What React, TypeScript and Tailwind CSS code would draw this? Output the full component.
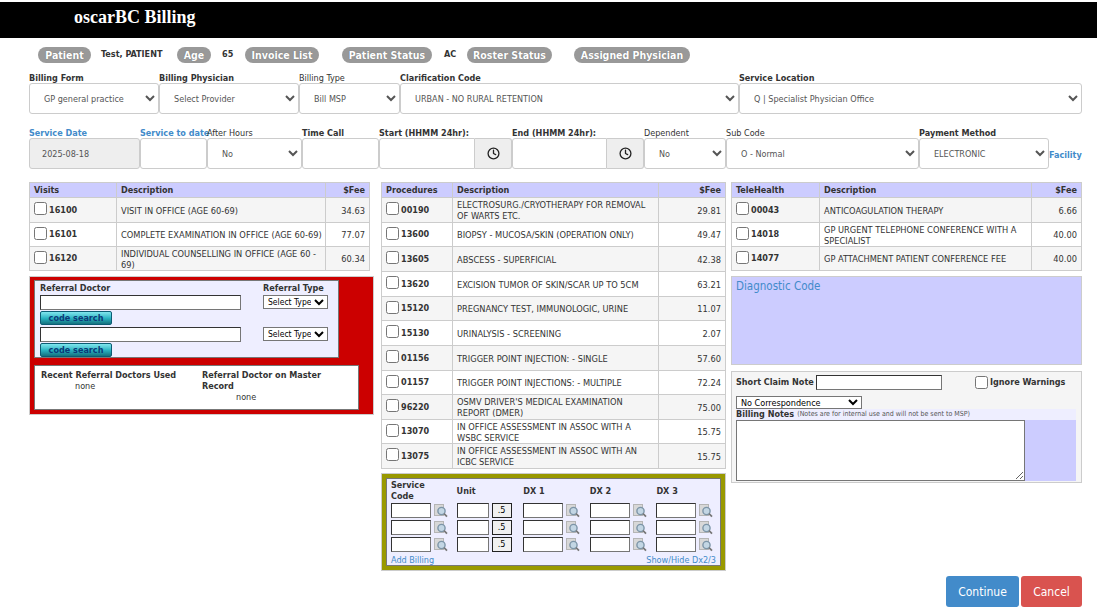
import React from 'react';
import { Clock } from 'lucide-react';

const pill = "inline-block h-[16px] whitespace-nowrap leading-[16px] rounded-full bg-[#999999] text-center text-white font-bold text-[10.5px] [text-shadow:0_0_1px_#666]";
const label = "block h-[11px] whitespace-nowrap leading-[13px] text-[9px] font-bold text-[#333]";
const labelThin = "block h-[11px] whitespace-nowrap leading-[13px] text-[9px] text-[#333]";
const labelBlue = "block h-[11px] whitespace-nowrap leading-[13px] text-[9px] font-bold text-[#428bca]";
const inputField = "block w-full h-[31px] rounded-[3px] border border-[#ccc] px-[12px] text-[9px] text-[#555]";
const selectField = "block w-full h-[31px] rounded-[3px] border border-[#ccc] bg-white px-[10px] text-[9px] text-[#555]";
const rawInput = "block bg-white border border-[#767676] border-t-[#333] border-l-[#333] h-[15px]";

type Row = { code: string; desc: string; fee: string; h: number };

const visits: Row[] = [
  { code: '16100', desc: 'VISIT IN OFFICE (AGE 60-69)', fee: '34.63', h: 25 },
  { code: '16101', desc: 'COMPLETE EXAMINATION IN OFFICE (AGE 60-69)', fee: '77.07', h: 24 },
  { code: '16120', desc: 'INDIVIDUAL COUNSELLING IN OFFICE (AGE 60 - 69)', fee: '60.34', h: 24 },
];

const procedures: Row[] = [
  { code: '00190', desc: 'ELECTROSURG./CRYOTHERAPY FOR REMOVAL OF WARTS ETC.', fee: '29.81', h: 25 },
  { code: '13600', desc: 'BIOPSY - MUCOSA/SKIN (OPERATION ONLY)', fee: '49.47', h: 24 },
  { code: '13605', desc: 'ABSCESS - SUPERFICIAL', fee: '42.38', h: 25 },
  { code: '13620', desc: 'EXCISION TUMOR OF SKIN/SCAR UP TO 5CM', fee: '63.21', h: 25 },
  { code: '15120', desc: 'PREGNANCY TEST, IMMUNOLOGIC, URINE', fee: '11.07', h: 24 },
  { code: '15130', desc: 'URINALYSIS - SCREENING', fee: '2.07', h: 25 },
  { code: '01156', desc: 'TRIGGER POINT INJECTION: - SINGLE', fee: '57.60', h: 25 },
  { code: '01157', desc: 'TRIGGER POINT INJECTIONS: - MULTIPLE', fee: '72.24', h: 24 },
  { code: '96220', desc: "OSMV DRIVER'S MEDICAL EXAMINATION REPORT (DMER)", fee: '75.00', h: 25 },
  { code: '13070', desc: 'IN OFFICE ASSESSMENT IN ASSOC WITH A WSBC SERVICE', fee: '15.75', h: 24 },
  { code: '13075', desc: 'IN OFFICE ASSESSMENT IN ASSOC WITH AN ICBC SERVICE', fee: '15.75', h: 25 },
];

const telehealth: Row[] = [
  { code: '00043', desc: 'ANTICOAGULATION THERAPY', fee: '6.66', h: 25 },
  { code: '14018', desc: 'GP URGENT TELEPHONE CONFERENCE WITH A SPECIALIST', fee: '40.00', h: 24 },
  { code: '14077', desc: 'GP ATTACHMENT PATIENT CONFERENCE FEE', fee: '40.00', h: 24 },
];

function CodeTable({ title, rows, col1, col3 }: { title: string; rows: Row[]; col1: number; col3: number }) {
  return (
    <table className="w-full table-fixed border-collapse text-[9.2px] text-[#333]">
      <colgroup>
        <col style={{ width: col1 }} />
        <col />
        <col style={{ width: col3 }} />
      </colgroup>
      <thead>
        <tr className="h-[15px] bg-[#ccccff] text-[9px] font-bold leading-[11px]">
          <th className="border border-[#ccc] px-[4px] py-0 text-left font-bold">{title}</th>
          <th className="border border-[#ccc] px-[4px] py-0 text-left font-bold">Description</th>
          <th className="border border-[#ccc] px-[4px] py-0 text-right font-bold">$Fee</th>
        </tr>
      </thead>
      <tbody>
        {rows.map((r, i) => (
          <tr key={r.code} style={{ height: r.h }} className={i % 2 === 0 ? 'bg-[#f5f5f5]' : 'bg-white'}>
            <td className="border border-[#ccc] px-[4px] py-0">
              <span className="flex items-center font-bold text-[9px] leading-[11px]">
                <input type="checkbox" className="m-0 mr-[2px] -mt-[3px] h-[13px] w-[13px]" />
                {r.code}
              </span>
            </td>
            <td className="border border-[#ccc] py-0 pl-[4px] pr-[1px] leading-[11px]">{r.desc}</td>
            <td className="border border-[#ccc] px-[4px] py-0 text-right leading-[11px]">{r.fee}</td>
          </tr>
        ))}
      </tbody>
    </table>
  );
}

function Magnifier() {
  return (
    <svg width="14" height="14" viewBox="0 0 14 14" className="ml-[3px] shrink-0">
      <rect x="0.5" y="0.5" width="9" height="11" fill="#d8d8d8" stroke="#b5b5b5" />
      <circle cx="7.5" cy="7" r="3.6" fill="#c3d6e4" stroke="#7d95a8" strokeWidth="1.4" />
      <path d="M10 9.6 L13 12.6" stroke="#777" strokeWidth="1.8" />
    </svg>
  );
}

function SearchButton() {
  return (
    <button className="block h-[14px] w-[72px] rounded-[2px] border border-[#0b5c74] bg-gradient-to-b from-[#7fe6ee] via-[#2bb6c4] to-[#15727f] text-center text-[9px] font-bold leading-[11px] text-[#0b3a78]">
      code search
    </button>
  );
}

function ClockAddon() {
  return (
    <span className="flex h-[31px] w-[37px] shrink-0 items-center justify-center rounded-r-[3px] border border-l-0 border-[#ccc] bg-[#eeeeee]">
      <Clock size={13} strokeWidth={2.4} className="text-[#222]" />
    </span>
  );
}

function DxCell() {
  return (
    <div className="flex items-center">
      <input className={`${rawInput} w-[40px]`} />
      <Magnifier />
    </div>
  );
}

function DxRow() {
  return (
    <div className="mb-[2px] flex h-[15px]">
      <div className="w-[66px]"><DxCell /></div>
      <div className="flex w-[67px] items-center">
        <input className={`${rawInput} w-[32px]`} />
        <span className="ml-[3px] flex h-[15px] w-[20px] items-center justify-center border border-[#222] bg-[#f0f0f0] text-[9px] text-black">.5</span>
      </div>
      <div className="w-[67px]"><DxCell /></div>
      <div className="w-[67px]"><DxCell /></div>
      <div className="w-[60px]"><DxCell /></div>
    </div>
  );
}

export default function App() {
  return (
    <div className="h-[611px] w-[1097px] overflow-hidden bg-white pt-[2px] font-['DejaVu_Sans_Condensed','Noto_Sans',sans-serif]">
      <div className="h-[36px] bg-black pl-[74px] pt-[5px] font-['Liberation_Serif',serif] text-[18px] font-bold leading-[20px] text-white">
        oscarBC Billing
      </div>

      <div className="pl-[29px] pr-[15px]">
        <div className="ml-[9px] mt-[9px] flex h-[16px] items-center text-[9px] font-bold text-[#333]">
          <span className={`${pill} w-[53px]`}>Patient</span>
          <span className="ml-[10px] w-[76px] whitespace-nowrap">Test, PATIENT</span>
          <span className={`${pill} w-[34px]`}>Age</span>
          <span className="ml-[11px] w-[23px]">65</span>
          <span className={`${pill} w-[74px]`}>Invoice List</span>
          <span className={`${pill} ml-[23px] w-[90px]`}>Patient Status</span>
          <span className="ml-[12px] w-[23px]">AC</span>
          <span className={`${pill} w-[85px]`}>Roster Status</span>
          <span className={`${pill} ml-[22px] w-[116px]`}>Assigned Physician</span>
        </div>

        <div className="mt-[9px] flex">
          <div className="w-[130px] shrink-0">
            <span className={label}>Billing Form</span>
            <select className={selectField}><option>GP general practice</option></select>
          </div>
          <div className="w-[140px] shrink-0">
            <span className={label}>Billing Physician</span>
            <select className={selectField}><option>Select Provider</option></select>
          </div>
          <div className="w-[101px] shrink-0">
            <span className={labelThin}>Billing Type</span>
            <select className={selectField}><option>Bill MSP</option></select>
          </div>
          <div className="w-[339px] shrink-0">
            <span className={label}>Clarification Code</span>
            <select className={selectField}><option>URBAN - NO RURAL RETENTION</option></select>
          </div>
          <div className="w-[343px] shrink-0">
            <span className={label}>Service Location</span>
            <select className={selectField}><option>Q | Specialist Physician Office</option></select>
          </div>
        </div>

        <div className="mt-[13px] flex">
          <div className="w-[111px] shrink-0">
            <span className={labelBlue}>Service Date</span>
            <input readOnly value="2025-08-18" className={`${inputField} bg-[#eeeeee]`} />
          </div>
          <div className="w-[67px] shrink-0">
            <span className={labelBlue}>Service to date</span>
            <input className={`${inputField} bg-white`} />
          </div>
          <div className="w-[95px] shrink-0">
            <span className={labelThin}>After Hours</span>
            <select className={selectField}><option>No</option></select>
          </div>
          <div className="w-[77px] shrink-0">
            <span className={label}>Time Call</span>
            <input className={`${inputField} bg-white`} />
          </div>
          <div className="w-[133px] shrink-0">
            <span className={label}>Start (HHMM 24hr):</span>
            <div className="flex">
              <input className={`${inputField} bg-white rounded-r-none`} />
              <ClockAddon />
            </div>
          </div>
          <div className="w-[132px] shrink-0">
            <span className={label}>End (HHMM 24hr):</span>
            <div className="flex">
              <input className={`${inputField} bg-white rounded-r-none`} />
              <ClockAddon />
            </div>
          </div>
          <div className="w-[82px] shrink-0">
            <span className={labelThin}>Dependent</span>
            <select className={selectField}><option>No</option></select>
          </div>
          <div className="w-[193px] shrink-0">
            <span className={labelThin}>Sub Code</span>
            <select className={selectField}><option>O - Normal</option></select>
          </div>
          <div className="w-[130px] shrink-0">
            <span className={label}>Payment Method</span>
            <select className={selectField}><option>ELECTRONIC</option></select>
          </div>
          <a className="mt-[22px] whitespace-nowrap text-[9px] font-bold text-[#428bca]">Facility</a>
        </div>

        <div className="mt-[13px] flex items-start">
          <div className="w-[341px] shrink-0">
            <CodeTable title="Visits" rows={visits} col1={87} col3={44} />

            <div className="mt-[5px] h-[139px] w-[345px] border border-[#ccc] bg-[#cc0000] px-[4px] pt-[3px]">
              <div className="flex h-[78px] w-[305px] border border-[#777] bg-[#eeeeff] pl-[5px] pt-[1px]">
                <div className="w-[223px]">
                  <b className="block h-[13px] text-[9px] leading-[13px] text-[#333]">Referral Doctor</b>
                  <input className={`${rawInput} w-[201px]`} />
                  <div className="mt-[1px]"><SearchButton /></div>
                  <input className={`${rawInput} mt-[2px] w-[201px]`} />
                  <div className="mt-[1px]"><SearchButton /></div>
                </div>
                <div>
                  <b className="block h-[13px] text-[9px] leading-[13px] text-[#333]">Referral Type</b>
                  <select className="block h-[14px] w-[65px] border border-[#767676] bg-white text-[8.5px] text-black"><option>Select Type</option></select>
                  <select className="mt-[18px] block h-[14px] w-[65px] border border-[#767676] bg-white text-[8.5px] text-black"><option>Select Type</option></select>
                </div>
              </div>
              <div className="mt-[7px] flex h-[45px] w-[325px] border border-[#777] bg-white pl-[6px] pt-[4px] text-[9px] leading-[11px] text-[#333]">
                <div className="w-[161px]">
                  <b>Recent Referral Doctors Used</b>
                  <div className="pl-[34px]">none</div>
                </div>
                <div className="w-[150px]">
                  <b>Referral Doctor on Master Record</b>
                  <div className="pl-[34px]">none</div>
                </div>
              </div>
            </div>
          </div>

          <div className="ml-[11px] w-[345px] shrink-0">
            <CodeTable title="Procedures" rows={procedures} col1={71} col3={67} />

            <div className="mt-[4px] h-[98px] border border-[#ccc] bg-[#999900] p-[4px]">
              <div className="h-[88px] border border-[#777] bg-[#eeeeff] px-[4px] pt-[1px]">
                <div className="flex h-[22px] items-center text-[9px] font-bold leading-[11px] text-[#333]">
                  <div className="w-[66px]">Service<br />Code</div>
                  <div className="w-[67px]">Unit</div>
                  <div className="w-[67px]">DX 1</div>
                  <div className="w-[67px]">DX 2</div>
                  <div className="w-[60px]">DX 3</div>
                </div>
                <div className="mt-[1px]">
                  <DxRow />
                  <DxRow />
                  <DxRow />
                </div>
                <div className="flex justify-between text-[9px] leading-[12px] text-[#428bca]">
                  <a>Add Billing</a>
                  <a>Show/Hide Dx2/3</a>
                </div>
              </div>
            </div>
          </div>

          <div className="ml-[5px] w-[351px] shrink-0">
            <CodeTable title="TeleHealth" rows={telehealth} col1={88} col3={50} />

            <div className="mt-[5px] h-[89px] border border-[#ccc] bg-[#ccccff] px-[4px] py-[2px] text-[11.5px] leading-[14px] text-[#428bca]">
              Diagnostic Code
            </div>

            <div className="mt-[6px] h-[112px] border border-[#ccc] bg-[#f5f5f5] px-[4px] pt-[3px] text-[#333]">
              <div className="flex h-[15px] items-center whitespace-nowrap text-[9px] font-bold">
                <span className="mr-[3px] w-[77px]">Short Claim Note</span>
                <input className={`${rawInput} w-[126px]`} />
                <input type="checkbox" className="m-0 ml-[33px] h-[13px] w-[13px]" />
                <span className="ml-[2px]">Ignore Warnings</span>
              </div>
              <select className="mt-[6px] block h-[13px] w-[126px] border border-[#767676] bg-white text-[9px] text-black">
                <option>No Correspondence</option>
              </select>
              <div className="mr-[1px] flex h-[11px] items-center bg-[#eeeeff] text-[9px] font-bold">
                Billing Notes
                <span className="ml-[3px] text-[7px] font-normal text-[#555]">(Notes are for internal use and will not be sent to MSP)</span>
              </div>
              <div className="mr-[1px] h-[61px] bg-[#ccccff]">
                <textarea className="block h-[61px] w-[289px] border border-[#767676] bg-white" />
              </div>
            </div>
          </div>
        </div>

        <div className="mt-[5px] flex justify-end gap-[2px]">
          <button className="h-[31px] w-[73px] rounded-[3px] bg-[#428bca] text-[12px] text-white">Continue</button>
          <button className="h-[31px] w-[61px] rounded-[3px] bg-[#d9534f] text-[12px] text-white">Cancel</button>
        </div>
      </div>
    </div>
  );
}
